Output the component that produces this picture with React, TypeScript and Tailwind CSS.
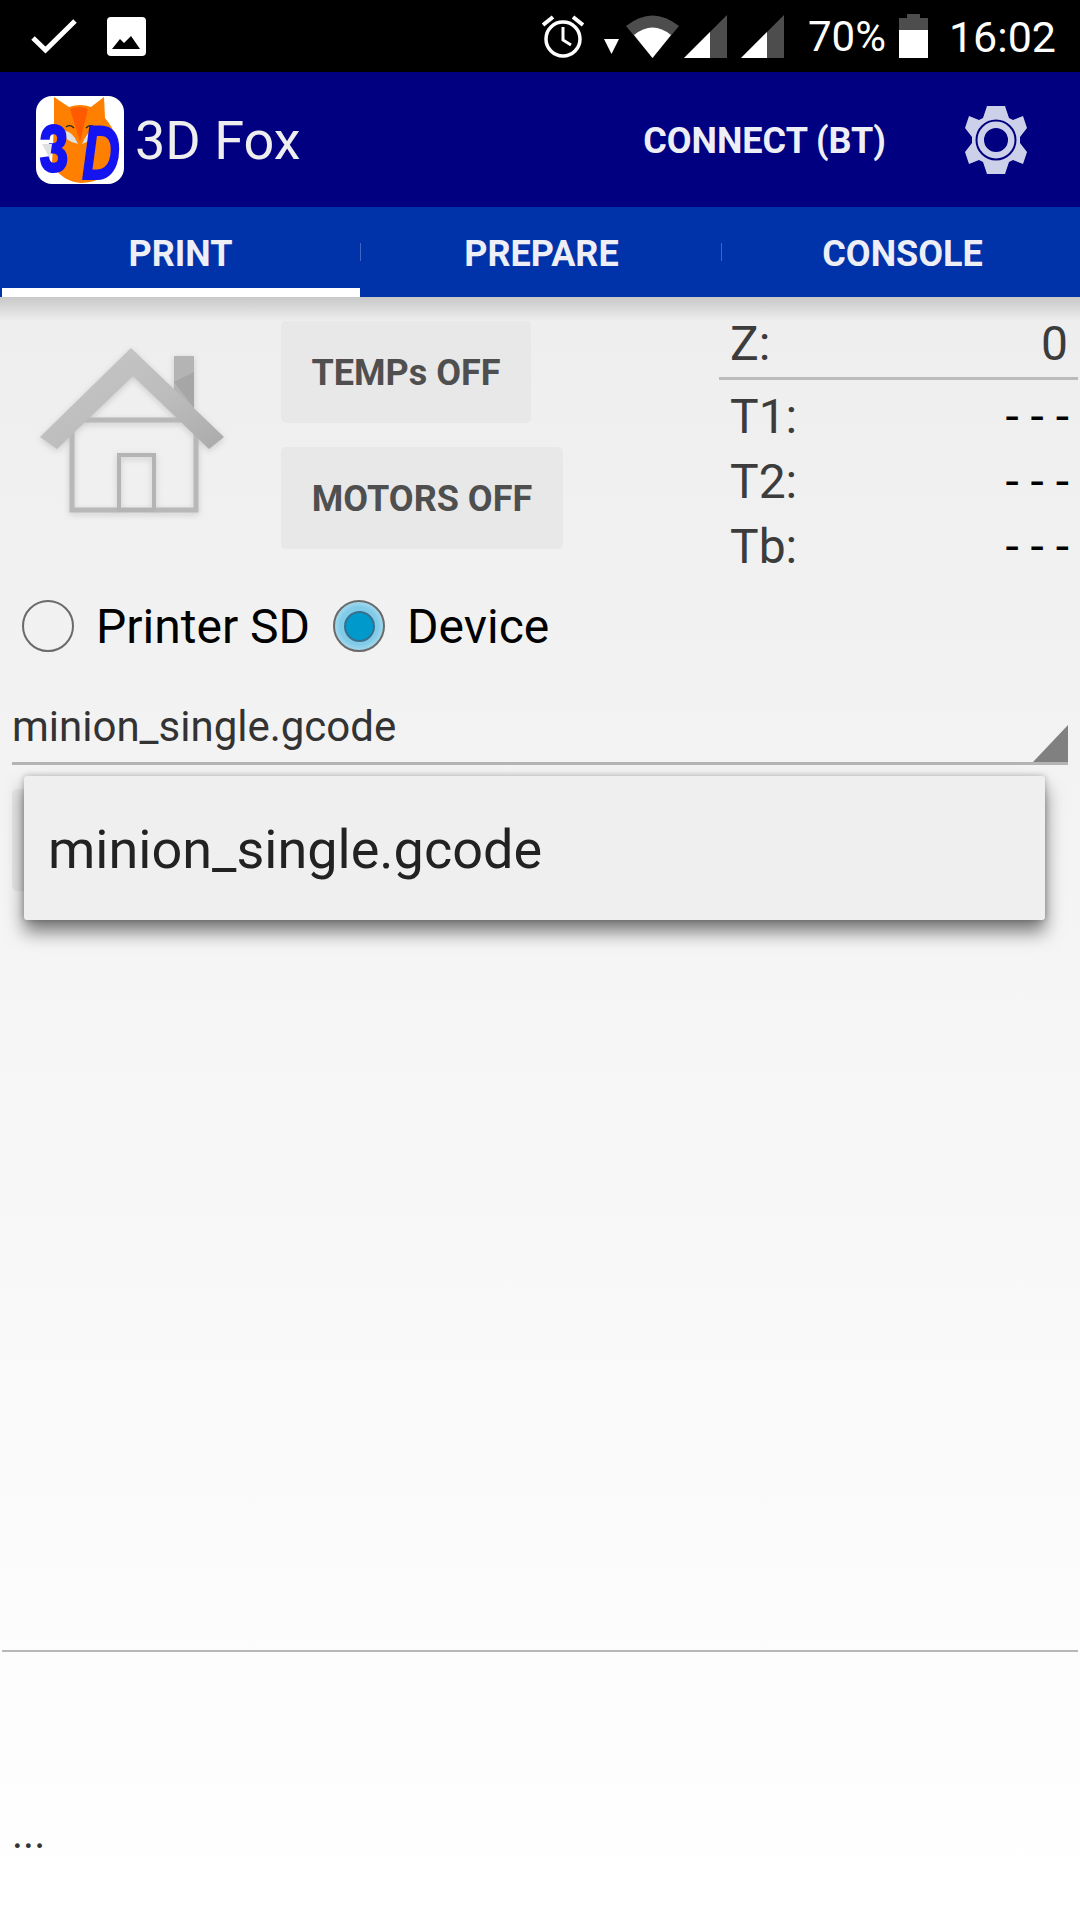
const roboto = "font-['Roboto','Liberation_Sans',sans-serif]";

function StatusBar() {
  return (
    <div className={`${roboto} flex h-[72px] items-center bg-black text-white`}>
      {/* check mark */}
      <svg width="46" height="36" viewBox="0 0 46 36" className="ml-[31px]">
        <path d="M2 20 L14.500 32 L44 3" fill="none" stroke="#fff" strokeWidth="5" />
      </svg>
      {/* picture notification */}
      <svg width="39" height="39" viewBox="0 0 39 39" className="ml-[30px]">
        <rect width="39" height="39" rx="4" fill="#fff" />
        <path d="M5 32 L13 22 L17 26 L24 19 L33 32 Z" fill="#000" />
      </svg>

      {/* alarm */}
      <svg width="42" height="44" viewBox="0 0 42 44" className="ml-auto">
        <circle cx="21" cy="25" r="17" fill="none" stroke="#fff" strokeWidth="3.500" />
        <path d="M21 13 V26 L29 31" fill="none" stroke="#fff" strokeWidth="3" />
        <path d="M1 11 L11 3 M41 11 L31 3" stroke="#fff" strokeWidth="4" />
      </svg>
      {/* data arrow */}
      <svg width="15" height="15" viewBox="0 0 15 15" className="ml-[20px] mt-[20px]">
        <path d="M0 0 H15 L7.500 15 Z" fill="#fff" />
      </svg>
      {/* wifi */}
      <svg width="53" height="43" viewBox="0 0 53 43" className="ml-[7px]">
        <path d="M0 11 Q26.500 -10 53 11 L26.500 43 Z" fill="#4d4d4d" />
        <path d="M8 20 Q26.500 5 45 20 L26.500 43 Z" fill="#fff" />
      </svg>
      {/* signal, twice */}
      <svg width="43" height="43" viewBox="0 0 43 43" className="ml-[5px]">
        <path d="M0 43 L43 0 V43 Z" fill="#4d4d4d" />
        <path d="M0 43 L26 17 V43 Z" fill="#fff" />
      </svg>
      <svg width="43" height="43" viewBox="0 0 43 43" className="ml-[14px]">
        <path d="M0 43 L43 0 V43 Z" fill="#4d4d4d" />
        <path d="M0 43 L26 17 V43 Z" fill="#fff" />
      </svg>
      <span className="ml-[24px] mt-[2px] text-[42px] leading-none">70%</span>
      {/* battery */}
      <svg width="29" height="44" viewBox="0 0 29 44" className="ml-[13px]">
        <path d="M8 0 H21 V4 H29 V44 H0 V4 H8 Z" fill="#4d4d4d" />
        <rect y="16" width="29" height="28" fill="#fff" />
      </svg>
      <span className="ml-[21px] mr-[24px] mt-[2px] text-[43px] leading-none">16:02</span>
    </div>
  );
}

function Logo() {
  return (
    <svg width="88" height="88" viewBox="0 0 88 88" className="shrink-0 overflow-visible">
      <rect width="88" height="88" rx="16" fill="#fff" />
      <path d="M18 1 L33 11 Q44 7 55 11 L68 1 L69 22 Q84 40 81 58 Q74 86 46 87 Q26 86 16 68 L18 28 Z" fill="#ff8000" />
      <path d="M34 13 Q44 9 52 13 L44 46 Z" fill="#ff5a00" />
      <path d="M25 35 Q36 33 42 48 Q30 46 25 35 Z" fill="#e0e0e0" />
      <path d="M63 32 Q52 33 46 48 Q58 44 63 32 Z" fill="#e0e0e0" />
      <path d="M30 31 Q34 28 38 32 M50 32 Q54 28 58 31" fill="none" stroke="#222" strokeWidth="1.200" />
      <text x="4" y="75" fontFamily="'Liberation Sans', sans-serif" fontWeight="700" fontSize="64" fill="#1414f0" stroke="#1414f0" strokeWidth="3" textLength="28" lengthAdjust="spacingAndGlyphs">
        3
      </text>
      <path d="M6 48 L16 48 L14 63 Z" fill="#e0e0e0" />
      <text x="46" y="83" fontFamily="'Liberation Sans', sans-serif" fontWeight="700" fontStyle="italic" fontSize="76" fill="#1414f0" stroke="#1414f0" strokeWidth="2" textLength="38" lengthAdjust="spacingAndGlyphs">
        D
      </text>
    </svg>
  );
}

function Gear() {
  return (
    <svg width="62" height="68" viewBox="-31 -34 62 68">
      <path
        fillRule="evenodd"
        fill="#ccd0e8"
        d="M-9 -34 H9 L13 -22 L17 -20 L27 -24 L31 -12 L24 -3 V3 L31 12 L27 24 L17 20 L13 22 L9 34 H-9 L-13 22 L-17 20 L-27 24 L-31 12 L-24 3 V-3 L-31 -12 L-27 -24 L-17 -20 L-13 -22 Z M0 -12 A12 12 0 1 0 0 12 A12 12 0 1 0 0 -12 Z"
      />
      <circle r="19.500" fill="none" stroke="#000080" strokeWidth="2" />
    </svg>
  );
}

function AppBar() {
  return (
    <div className={`${roboto} flex h-[135px] items-center bg-[#000080] pl-[36px]`}>
      <Logo />
      <span className="ml-[11px] mt-[2px] text-[54px] leading-none text-[#eeeeee]">3D Fox</span>
      <span className="ml-auto mt-[2px] text-[36px] font-bold leading-none text-[#eeeef6]">CONNECT (BT)</span>
      <div className="ml-[79px] mr-[53px] flex">
        <Gear />
      </div>
    </div>
  );
}

function Tab({ label, active, sep }: { label: string; active?: boolean; sep?: boolean }) {
  return (
    <div className="relative flex h-full w-[361px] shrink-0 items-center justify-center pt-[3px]">
      <span className="text-[36px] font-bold leading-none text-[#eeeef6]">{label}</span>
      {sep && <div className="absolute right-0 top-[36px] h-[18px] w-[1px] bg-[#3f66c4]" />}
      {active && <div className="absolute bottom-0 left-[2px] right-[1px] h-[9px] bg-white" />}
    </div>
  );
}

function Tabs() {
  return (
    <div className={`${roboto} flex h-[90px] bg-[#0033aa]`}>
      <Tab label="PRINT" active sep />
      <Tab label="PREPARE" sep />
      <Tab label="CONSOLE" />
    </div>
  );
}

function House() {
  return (
    <svg width="195" height="180" viewBox="35 340 195 180" className="drop-shadow-[0_2px_3px_rgba(0,0,0,0.15)]">
      <defs>
        <linearGradient id="roof" x1="0" y1="0" x2="1" y2="1">
          <stop offset="0" stopColor="#c8c8c8" />
          <stop offset="0.6" stopColor="#bcbcbc" />
          <stop offset="1" stopColor="#aaaaaa" />
        </linearGradient>
      </defs>
      <rect x="72" y="420" width="124" height="90" fill="none" stroke="#b8b8b8" strokeWidth="5" />
      <rect x="119" y="455" width="35" height="55" fill="none" stroke="#b4b4b4" strokeWidth="4" />
      <path d="M174 356 H194 V410 L174 400 Z" fill="#b4b4b4" />
      <path d="M131 348 L224 437 L209 449 L133 376 L57 449 L40 437 Z" fill="url(#roof)" />
      <path d="M174 382 L194 372 V408 Z" fill="#a6a6a6" />
    </svg>
  );
}

function OffButton({ label, width }: { label: string; width: string }) {
  return (
    <div className={`flex h-[102px] items-center justify-center rounded-[5px] bg-[#e8e8e8] pt-[1px] ${width}`}>
      <span className="text-[36px] font-bold leading-none text-[#4f4f4f]">{label}</span>
    </div>
  );
}

function Reading({ label, value }: { label: string; value: string }) {
  return (
    <div className="flex h-[65px] items-center justify-between pl-[11px] pr-[9px] pt-[3px]">
      <span className="text-[48px] leading-none text-[#3c3c3c]">{label}</span>
      <span className="text-[48px] leading-none text-black">{value}</span>
    </div>
  );
}

function Radio({ checked }: { checked?: boolean }) {
  if (checked) {
    return (
      <div className="flex h-[52px] w-[52px] items-center justify-center rounded-full border-2 border-[#6a6a6a] bg-[radial-gradient(circle,#7fcbe8_55%,#e4f1f6_100%)]">
        <div className="h-[31px] w-[31px] rounded-full border-2 border-[#3a6f8c] bg-[#0099cc]" />
      </div>
    );
  }
  return <div className="h-[52px] w-[52px] rounded-full border-2 border-[#6a6a6a]" />;
}

export default function App() {
  return (
    <div className="flex h-[1920px] w-[1080px] flex-col overflow-hidden bg-white">
      <StatusBar />
      <AppBar />
      <Tabs />

      <div className={`${roboto} relative flex flex-1 flex-col bg-gradient-to-b from-[#eeeeee] to-white`}>
        {/* shadow the tab bar drops on the content */}
        <div className="absolute left-0 right-0 top-0 h-[24px] bg-gradient-to-b from-[#c8c8c8] to-transparent" />

        <div className="relative flex h-[282px]">
          <div className="ml-[35px] mt-[43px]">
            <House />
          </div>
          <div className="ml-[51px] mt-[24px] flex flex-col items-start gap-[24px]">
            <OffButton label="TEMPs OFF" width="w-[250px]" />
            <OffButton label="MOTORS OFF" width="w-[282px]" />
          </div>
          <div className="ml-auto mr-[2px] w-[359px]">
            <div className="flex h-[83px] items-end justify-between border-b-[3px] border-[#bbbbbb] pb-[9px] pl-[11px] pr-[10px]">
              <span className="text-[48px] leading-none text-[#3c3c3c]">Z:</span>
              <span className="text-[48px] leading-none text-[#3c3c3c]">0</span>
            </div>
            <div className="mt-[3px]">
              <Reading label="T1:" value="- - -" />
              <Reading label="T2:" value="- - -" />
              <Reading label="Tb:" value="- - -" />
            </div>
          </div>
        </div>

        <div className="mt-[21px] flex h-[52px] items-center pl-[22px]">
          <Radio />
          <span className="ml-[22px] pt-[2px] text-[48px] leading-none text-black">Printer SD</span>
          <div className="ml-[23px]">
            <Radio checked />
          </div>
          <span className="ml-[22px] pt-[2px] text-[48px] leading-none text-black">Device</span>
        </div>

        <div className="relative mx-[12px] mt-[46px] flex h-[67px] items-center border-b-[3px] border-[#b4b4b4] pb-[6px]">
          <span className="text-[42px] leading-none text-[#333333]">minion_single.gcode</span>
          <svg width="35" height="37" viewBox="0 0 35 37" className="absolute bottom-0 right-0">
            <path d="M35 0 V37 H0 Z" fill="#808080" />
          </svg>
        </div>

        {/* button underneath the open drop-down */}
        <div className="ml-[12px] mt-[24px] h-[102px] w-[400px] rounded-[5px] bg-[#e8e8e8]" />

        <div className="mt-auto h-[270px]">
          <div className="mx-[2px] h-[2px] bg-[#b8b8b8]" />
          <div className="ml-[12px] mt-[161px] text-[42px] leading-none text-[#333333]">...</div>
        </div>

        {/* open drop-down */}
        <div className="absolute left-[24px] top-[479px] flex h-[144px] w-[1021px] items-center rounded-[3px] bg-[#efefef] pl-[24px] pt-[3px] shadow-[0_12px_18px_rgba(0,0,0,0.5),0_0_6px_rgba(0,0,0,0.25)]">
          <span className="text-[54px] leading-none text-[#222222]">minion_single.gcode</span>
        </div>
      </div>
    </div>
  );
}
